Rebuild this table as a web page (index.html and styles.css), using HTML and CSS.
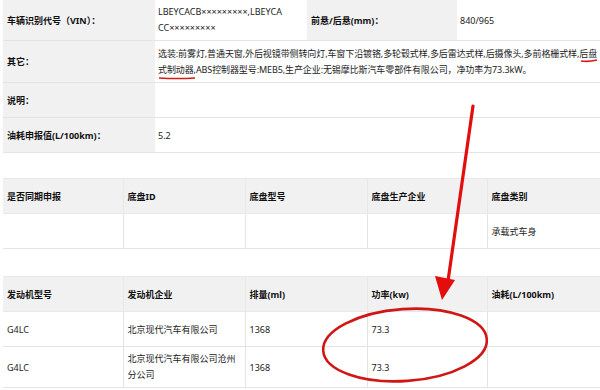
FILE: index.html
```html
<!DOCTYPE html>
<html lang="zh-CN">
<head>
<meta charset="utf-8">
<title>车辆参数</title>
<link rel="stylesheet" href="styles.css">
</head>
<body>
<div class="page">
  <table class="grid info">
    <colgroup><col class="c1"><col class="c2"><col class="c3"><col class="c4"></colgroup>
    <tr class="r1">
      <th>车辆识别代号（VIN）：</th>
      <td class="lh">LBEYCACB×××××××××,LBEYCA<br>CC×××××××××</td>
      <th>前悬/后悬(mm)：</th>
      <td>840/965</td>
    </tr>
    <tr class="r2">
      <th>其它：</th>
      <td colspan="3" class="lh"><span class="nw">选装:前雾灯,普通天窗,外后视镜带侧转向灯,车窗下沿镀铬,多轮毂式样,多后雷达式样,后摄像头,多前格栅式样,后盘</span><br><span class="nw">式制动器,ABS控制器型号:MEB5,生产企业:无锡摩比斯汽车零部件有限公司，净功率为73.3kW。</span></td>
    </tr>
    <tr class="r3">
      <th>说明：</th>
      <td colspan="3"></td>
    </tr>
    <tr class="r4">
      <th>油耗申报值(L/100km)：</th>
      <td colspan="3">5.2</td>
    </tr>
  </table>

  <table class="grid list chassis">
    <colgroup><col class="k1"><col class="k2"><col class="k3"><col class="k4"><col class="k5"></colgroup>
    <tr class="hd">
      <th>是否同期申报</th><th>底盘ID</th><th>底盘型号</th><th>底盘生产企业</th><th>底盘类别</th>
    </tr>
    <tr class="rw">
      <td></td><td></td><td></td><td></td><td>承载式车身</td>
    </tr>
  </table>

  <table class="grid list engine">
    <colgroup><col class="k1"><col class="k2"><col class="k3"><col class="k4"><col class="k5"></colgroup>
    <tr class="hd">
      <th>发动机型号</th><th>发动机企业</th><th>排量(ml)</th><th>功率(kw)</th><th>油耗(L/100km)</th>
    </tr>
    <tr class="rw">
      <td>G4LC</td><td>北京现代汽车有限公司</td><td>1368</td><td>73.3</td><td></td>
    </tr>
    <tr class="rw tall">
      <td>G4LC</td><td class="lh">北京现代汽车有限公司沧州<br>分公司</td><td>1368</td><td>73.3</td><td></td>
    </tr>
  </table>

  <svg class="marks" width="600" height="390" viewBox="0 0 600 390">
    <path d="M581 62 Q589 63 597 61" fill="none" stroke="#d41a1a" stroke-width="1.6"/>
    <path d="M159 79 Q177 80 195 79" fill="none" stroke="#d41a1a" stroke-width="1.6"/>
    <path d="M473 107 L448 282" fill="none" stroke="#e30d0d" stroke-width="3.2" stroke-linecap="round"/>
    <path d="M435 277 L455 281 L442 301 Z" fill="#e30d0d"/>
    <ellipse cx="405" cy="346" rx="82" ry="36" transform="rotate(-4 405 346)" fill="none" stroke="#d11616" stroke-width="2.6"/>
  </svg>
</div>
</body>
</html>
```
FILE: styles.css
```css
html, body {
  margin: 0;
  padding: 0;
  background: #ffffff;
}
body {
  font-family: "Noto Sans", "Noto Sans CJK SC", sans-serif;
  font-size: 9px;
  color: #222222;
  width: 600px;
  height: 390px;
  overflow: hidden;
}
.page {
  position: relative;
  padding-left: 3px;
  width: 597px;
}
.grid {
  border-collapse: collapse;
  table-layout: fixed;
}
.grid th, .grid td {
  border: 1px solid #e4e4e4;
  text-align: left;
  vertical-align: middle;
  padding: 0 0 0 3px;
  overflow: hidden;
}
.grid th {
  background: #f1f1f1;
  color: #111;
  font-weight: 700;
  padding-left: 4px;
}
.lh { line-height: 16px; }
.nw { white-space: nowrap; letter-spacing: -0.1px; }

.info { width: 597px; margin-top: -1px; }
.info th, .info td { border-left: none; border-right: none; }
.info .c1 { width: 152px; }
.info .c2 { width: 152px; }
.info .c3 { width: 150px; }
.info .c4 { width: 143px; }
.info .r1 { height: 41px; }
.info .r2 { height: 42px; }
.info .r3 { height: 35px; }
.info .r4 { height: 35px; }

.list { width: 597px; }
.list td { padding-left: 4px; }
.list .k1 { width: 120px; }
.list .k2 { width: 122px; }
.list .k3 { width: 122px; }
.list .k4 { width: 120px; }
.list .k5 { width: 113px; }
.list th:first-child, .list td:first-child { border-left: none; }
.list th:last-child, .list td:last-child { border-right: none; }
.list .hd { height: 35px; }
.list .hd th { border-color: #e8e8e8; }
.list .rw { height: 35px; }
.list .tall { height: 41px; }

.chassis { margin-top: 25px; }
.engine { margin-top: 27px; }

.marks {
  position: absolute;
  left: 0;
  top: 0;
  pointer-events: none;
}
```
